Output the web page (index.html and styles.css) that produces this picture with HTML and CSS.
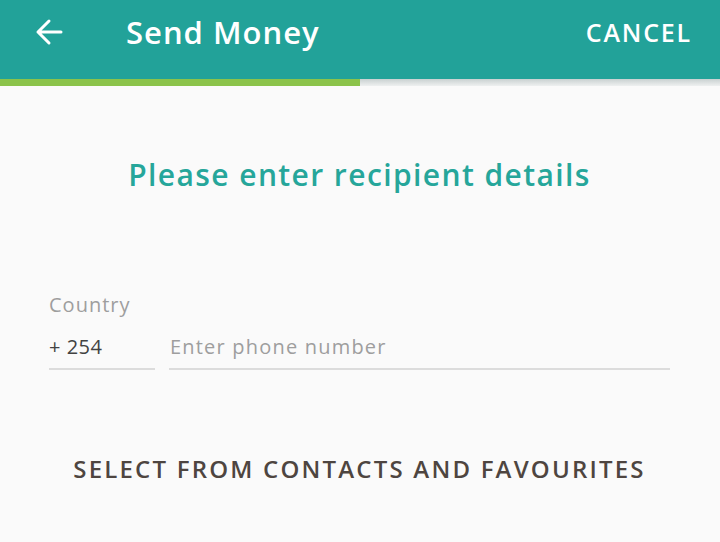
FILE: index.html
```html
<!DOCTYPE html>
<html lang="en">
<head>
  <meta charset="UTF-8" />
  <title>Send Money</title>
  <link rel="stylesheet" href="styles.css">
</head>
<body>

  <header class="appbar">
    <button class="back" aria-label="Back">
      <svg width="30" height="30" viewBox="0 0 30 30">
        <path d="M27 15H4M15 4L4 15l11 11" fill="none" stroke="#fff" stroke-width="3" stroke-linecap="round" stroke-linejoin="round"/>
      </svg>
    </button>
    <h1 class="title">Send Money</h1>
    <button class="cancel">CANCEL</button>
  </header>

  <div class="progress">
    <div class="progress-bar"></div>
  </div>

  <main class="content">
    <h2 class="prompt">Please enter recipient details</h2>

    <div class="phone-row">
      <div class="country">
        <label class="country-label">Country</label>
        <div class="country-code">+ 254</div>
      </div>
      <input class="phone" type="text" placeholder="Enter phone number">
    </div>

    <button class="contacts">SELECT FROM CONTACTS AND FAVOURITES</button>
  </main>

</body>
</html>
```

FILE: styles.css
```css
body {
  margin: 0;
  background: #fafafa;
  font-family: "Open Sans", "DejaVu Sans", sans-serif;
}
button {
  border: none;
  background: none;
  font-family: inherit;
  padding: 0;
  cursor: pointer;
}
.appbar {
  height: 79px;
  background: #22a299;
  display: flex;
  align-items: center;
  padding: 0 28px 16px 34px;
  box-sizing: border-box;
}
.back {
  width: 30px;
  height: 30px;
}
.title {
  margin: 0 0 0 62px;
  font-size: 31px;
  font-weight: 600;
  letter-spacing: 1px;
  color: #fff;
  flex: 1;
}
.cancel {
  color: #fff;
  font-size: 25px;
  font-weight: 600;
  letter-spacing: 1.8px;
}
.progress {
  height: 7px;
  background: linear-gradient(#c9d1d1, #eef0f0);
}
.progress-bar {
  width: 360px;
  height: 100%;
  background: #8bc34a;
}
.content {
  padding: 0 50px 0 49px;
}
.prompt {
  margin: 68px 0 0;
  text-align: center;
  font-size: 30px;
  font-weight: 600;
  letter-spacing: 1.4px;
  color: #26a69a;
}
.phone-row {
  display: flex;
  align-items: flex-end;
  gap: 14px;
  margin-top: 96px;
}
.country {
  width: 106px;
}
.country-label {
  display: block;
  font-size: 20px;
  letter-spacing: 1px;
  color: #9e9e9e;
}
.country-code {
  margin-top: 15px;
  padding-bottom: 8px;
  font-size: 20px;
  letter-spacing: 0.5px;
  color: #424242;
  border-bottom: 2px solid #dcdcdc;
}
.phone {
  flex: 1;
  border: none;
  border-bottom: 2px solid #dcdcdc;
  background: none;
  font-family: inherit;
  font-size: 20px;
  letter-spacing: 1.2px;
  padding: 0 0 8px 1px;
  outline: none;
}
.phone::placeholder {
  color: #9e9e9e;
}
.contacts {
  display: block;
  margin: 82px auto 0;
  font-size: 24px;
  font-weight: 600;
  letter-spacing: 2.2px;
  color: #4e4540;
}
```
